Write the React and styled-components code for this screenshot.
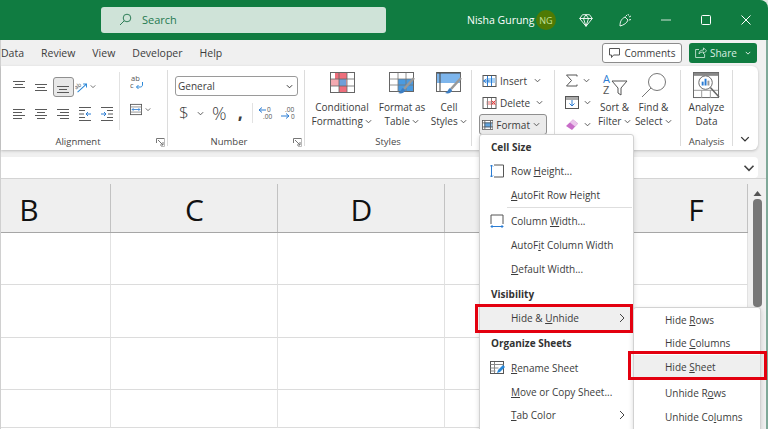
import React from "react";
import styled, { createGlobalStyle } from "styled-components";

const Global = createGlobalStyle`
  html, body { margin: 0; padding: 0; }
  body { font-family: "Open Sans", "Noto Sans", sans-serif; background: #dfe8e3; }
  * { box-sizing: border-box; }
`;

const Page = styled.div`
  position: relative;
  width: 768px;
  height: 429px;
  overflow: hidden;
  background: #107c41;
  border-radius: 0 8px 0 0;
  color: #3c3c3c;
`;

const TitleBar = styled.div`
  height: 40px;
  display: flex;
  align-items: center;
  padding-left: 101px;
  color: #fff;
`;

const SearchBox = styled.div`
  width: 285px;
  flex: none;
  height: 26px;
  margin-top: -1px;
  border-radius: 3px;
  background: #cfe3d8;
  display: flex;
  align-items: center;
  gap: 10px;
  padding-left: 18px;
  font-size: 11px;
  color: #1f7a50;
`;

const UserName = styled.span`
  margin-left: 81px;
  flex: none;
  font-size: 10.5px;
  width: 69px;
  white-space: nowrap;
`;

const Avatar = styled.div`
  width: 20px;
  height: 20px;
  flex: none;
  border-radius: 50%;
  background: #4f7a04;
  color: #c4e09a;
  font-size: 9px;
  display: flex;
  align-items: center;
  justify-content: center;
`;

const TitleIcons = styled.div`
  display: flex;
  margin-left: 10px;
  align-items: center;
`;

const TitleIcon = styled.div`
  width: 40px;
  flex: none;
  display: flex;
  justify-content: center;
  align-items: center;
`;

const Body = styled.div`
  height: 389px;
  width: 768px;
  background: #f0f0f0;
  border-left: 1px solid #d0d0d0;
  border-right: 2px solid #7fa898;
`;

const TabRow = styled.div`
  height: 26px;
  display: flex;
  align-items: center;
  padding: 0 9px 1px 0;
  font-size: 10.5px;
`;

const Tab = styled.span`
  margin-right: ${(p) => p.$gap}px;
`;

const Comments = styled.button`
  margin-left: auto;
  width: 80px;
  height: 20px;
  padding: 0;
  border: 1px solid #8c8c8c;
  border-radius: 3px;
  background: #fff;
  font: 10px "Open Sans", sans-serif;
  color: #3c3c3c;
  display: flex;
  align-items: center;
  justify-content: center;
  gap: 5px;
`;

const Share = styled.button`
  margin-left: 7px;
  width: 68px;
  height: 20px;
  padding: 0 0 0 6px;
  border: 0;
  border-radius: 3px;
  background: #107c41;
  font: 10px "Open Sans", sans-serif;
  color: #dbeee3;
  display: flex;
  align-items: center;
  gap: 3px;
`;

const Ribbon = styled.div`
  width: 757px;
  height: 84px;
  background: #fff;
  border-radius: 0 6px 6px 0;
  box-shadow: 0 1px 3px rgba(0, 0, 0, 0.22);
  display: flex;
  padding-top: 4px;
`;

const Group = styled.div`
  width: ${(p) => p.$w}px;
  height: 76px;
  flex: none;
  position: relative;
  border-right: ${(p) => (p.$plain ? "0" : "1px solid #dcdcdc")};
  display: flex;
  flex-direction: column;
  ${(p) => p.$plain && "align-items: center; justify-content: flex-end; padding-bottom: 2px;"}
`;

const GroupContent = styled.div`
  flex: 1;
  min-height: 0;
  display: flex;
  flex-direction: ${(p) => (p.$stack ? "column" : "row")};
  padding-left: ${(p) => p.$pad || 0}px;
`;

const GroupLabel = styled.div`
  height: 15px;
  margin-bottom: -4px;
  text-align: center;
  font-size: 9.5px;
  line-height: 14px;
  padding-right: ${(p) => p.$shift || 0}px;
  color: #484848;
`;

const Launcher = styled.svg`
  position: absolute;
  right: 2px;
  bottom: -1px;
`;

const IconGrid = styled.div`
  display: grid;
  grid-template-columns: repeat(5, 22px);
  grid-auto-rows: 27px;
  align-items: center;
  justify-items: center;
  padding: 3px 0 0 7px;
`;

const IconCell = styled.div`
  width: 21px;
  height: 20px;
  display: flex;
  align-items: center;
  justify-content: center;
  gap: 3px;
  border-radius: 3px;
  ${(p) => p.$active && "background: #e8e8e8; border: 1px solid #8f8f8f;"}
`;

const VSep = styled.div`
  width: 1px;
  height: 58px;
  flex: none;
  margin: 2px 0 0 ${(p) => p.$ml || 0}px;
  background: #e2e2e2;
`;

const NumberSep = styled.div`
  width: 1px;
  height: 20px;
  flex: none;
  background: #e2e2e2;
`;

const WrapColumn = styled.div`
  display: flex;
  flex-direction: column;
  gap: 7px;
  padding: 4px 0 0 10px;
`;

const FormatSelect = styled.div`
  width: 123px;
  height: 20px;
  margin: 6px 0 0 7px;
  border: 1px solid #9a9a9a;
  border-radius: 3px;
  font-size: 10px;
  padding: 0 4px 0 2px;
  display: flex;
  align-items: center;
  justify-content: space-between;
`;

const NumberRow = styled.div`
  display: flex;
  align-items: center;
  height: 20px;
  margin: 7px 0 0 11px;
`;

const NumberGlyph = styled.span`
  font-size: ${(p) => p.$size}px;
  font-weight: ${(p) => p.$weight || 300};
  width: ${(p) => p.$w}px;
  margin-left: ${(p) => p.$ml || 0}px;
  flex: none;
  line-height: 20px;
`;

const Large = styled.div`
  width: ${(p) => p.$w}px;
  flex: none;
  display: flex;
  flex-direction: column;
  align-items: center;
  font-size: 10px;
  line-height: 13.5px;
  text-align: center;
  white-space: nowrap;
`;

const LargeIcon = styled.div`
  height: 31px;
  padding-top: ${(p) => p.$top ?? 6}px;
`;

const CellStack = styled.div`
  width: 74px;
  margin-left: 10px;
  display: flex;
  flex-direction: column;
  gap: 1px;
  font-size: 10px;
`;

const CellAction = styled.div`
  height: 21px;
  display: flex;
  align-items: center;
  gap: 3px;
  position: relative;
  border-radius: 3px;
  ${(p) => p.$active && "background: #ebebeb; border: 1px solid #8f8f8f; margin-left: -3px; padding-left: 2px; width: 68px;"}
`;

const ActionArrow = styled.span`
  margin-left: auto;
  margin-right: ${(p) => p.$mr}px;
  display: flex;
`;

const EditStack = styled.div`
  width: 40px;
  flex: none;
  display: flex;
  flex-direction: column;
  padding: 1px 0 0 10px;
  gap: 3px;
`;

const EditItem = styled.div`
  height: 19px;
  display: flex;
  align-items: center;
  gap: 5px;
`;

const FormulaBar = styled.div`
  width: 757px;
  height: 21px;
  margin-top: 7px;
  background: #fff;
  border-radius: 0 4px 4px 0;
  display: flex;
  align-items: center;
  justify-content: flex-end;
  padding-right: 3px;
`;

const Sheet = styled.div`
  height: 251px;
  display: flex;
  border-top: 1px solid #d4d4d4;
`;

const GridWrap = styled.div`
  width: 747px;
  flex: none;
  display: grid;
  grid-template-columns: 110px 167px 167px 167px 136px;
  grid-template-rows: 54px 52px 53px 52px 38px;
  background: #fff;
`;

const ColHead = styled.div`
  background: linear-gradient(#c2c2c2, #c2c2c2) right bottom / 1px 48px no-repeat, #efefef;
  border-bottom: 1px solid #a6a6a6;
  font: 30px "Open Sans", sans-serif;
  color: #111;
  display: flex;
  align-items: center;
  justify-content: center;
  padding: 8px ${(p) => p.$right || 0}px 0 ${(p) => p.$left || 0}px;
`;

const Cell = styled.div`
  border-right: 1px solid #e2e2e2;
  border-bottom: 1px solid #dcdcdc;
`;

const ScrollTrack = styled.div`
  width: 18px;
  padding: 11px 0 0 5px;
  display: flex;
  flex-direction: column;
  gap: 3px;
`;

const ScrollThumb = styled.div`
  width: 9px;
  height: 108px;
  border-radius: 4px;
  background: #777;
`;

const Menu = styled.div`
  position: absolute;
  left: 479px;
  top: 134px;
  width: 155px;
  height: 300px;
  background: #fff;
  border: 1px solid #d2d2d2;
  border-radius: 3px;
  box-shadow: 0 2px 5px rgba(0, 0, 0, 0.15);
  font-size: 10px;
`;

const SubMenu = styled.div`
  position: absolute;
  left: 633px;
  top: 307px;
  width: 128px;
  height: 130px;
  background: #fff;
  border: 1px solid #d2d2d2;
  border-radius: 3px;
  box-shadow: 0 2px 5px rgba(0, 0, 0, 0.15);
  font-size: 10px;
`;

const MenuHead = styled.div`
  height: ${(p) => p.$h || 25}px;
  padding-left: 11px;
  font-weight: 700;
  display: flex;
  align-items: center;
  color: #333;
`;

const MenuItem = styled.div`
  position: relative;
  height: ${(p) => p.$h || 24}px;
  display: flex;
  align-items: center;
  padding-left: 31px;
  white-space: nowrap;
  ${(p) => p.$hot && "background: #efefef;"}
  u { text-underline-offset: 1px; }
`;

const MenuIcon = styled.svg`
  position: absolute;
  left: 10px;
  top: 50%;
  transform: translateY(-50%);
`;

const MenuArrow = styled.svg`
  position: absolute;
  right: 8px;
  top: 50%;
  transform: translateY(-50%);
`;

const MenuRule = styled.div`
  height: 1px;
  margin: 0 1px 1px 27px;
  background: #dedede;
`;

const RedBox = styled.div`
  position: absolute;
  left: ${(p) => p.$l}px;
  top: ${(p) => p.$t}px;
  width: ${(p) => p.$w}px;
  height: ${(p) => p.$h}px;
  border: 3px solid #e3000f;
`;

const Chevron = ({ c = "#555", s = 7 }) => (
  <svg width={s} height={s} viewBox="0 0 8 8">
    <path d="M1 2.5 4 5.5 7 2.5" fill="none" stroke={c} strokeWidth="1.1" />
  </svg>
);

const Lines = ({ rows }) => (
  <svg width="14" height="14" viewBox="0 0 14 14">
    {rows.map(([x1, x2, y], i) => (
      <line key={i} x1={x1} x2={x2} y1={y} y2={y} stroke="#5a5a5a" strokeWidth="1" />
    ))}
  </svg>
);

const Indent = ({ flip }) => (
  <svg width="14" height="14" viewBox="0 0 14 14">
    <path d={flip ? "M7 3.500h6M7 10.500h6M8 7h5" : "M1 3.500h6M1 10.500h6M1 7h5"} stroke="#5a5a5a" fill="none" />
    <path d={flip ? "M1 7h5M4 5l2 2-2 2" : "M13 7H8M10 5 8 7l2 2"} stroke="#2b7cd3" fill="none" />
    <path d="M1 13.500h12M1 .5h12" stroke="#5a5a5a" />
  </svg>
);

const ConditionalIcon = () => (
  <svg width="25" height="21" viewBox="0 0 25 21">
    <rect x=".5" y=".5" width="24" height="20" fill="#fff" stroke="#666" />
    <rect x="5" y="1" width="12" height="6" fill="#ee6f7c" />
    <rect x="1" y="7" width="16" height="7" fill="#f4aab1" />
    <rect x="9" y="14" width="8" height="6" fill="#ee6f7c" />
    <rect x="9" y="7" width="7" height="7" fill="#6f9fd8" />
    <path d="M1 7h23M1 14h23M9 1v19M17 1v19" stroke="#666" strokeWidth=".8" fill="none" />
  </svg>
);

const TableIcon = ({ full }) => (
  <svg width="27" height="25" viewBox="0 0 27 25">
    <rect x=".5" y=".5" width="24" height="19" fill="#fff" stroke="#666" />
    {full ? (
      <rect x="1" y="1" width="23" height="10" fill="#7db5ec" />
    ) : (
      <rect x="9" y="7" width="15" height="12" fill="#4a9ae0" />
    )}
    {full ? (
      <path d="M1 1h23M4 1v18" stroke="#444" fill="none" />
    ) : (
      <path d="M1 7h23M1 13h23M9 1v19M17 1v19" stroke="#777" strokeWidth=".8" fill="none" />
    )}
    <path d="M25 6 15 17" stroke="#999" strokeWidth="2.6" />
    <path d="M14 16c-2 1-2 4-5 5 3 1 7 0 7-3z" fill="#3d7fc4" />
  </svg>
);

const Launch = () => (
  <Launcher width="9" height="9" viewBox="0 0 9 9">
    <path d="M.5 5V.5H8.500M2 2l5 5M7 4v3H4" fill="none" stroke="#777" />
    <path d="M8.500 .5V8.500H5" fill="none" stroke="#bbb" />
  </Launcher>
);

const AlignRows = [
  [[1, 13, 1.5], [3, 11, 4.5], [1, 13, 7.5]],
  [[1, 13, 4.5], [3, 11, 7.5], [1, 13, 10.5]],
  [[1, 13, 6.5], [3, 11, 9.5], [1, 13, 12.5]],
];

const columns = ["B", "C", "D", "", "F"];

export default function App() {
  return (
    <Page>
      <Global />
      <TitleBar>
        <SearchBox>
          <svg width="13" height="13" viewBox="0 0 13 13">
            <circle cx="8" cy="5" r="3.800" fill="none" stroke="#2f7d57" />
            <path d="M5.200 7.800 1 12" stroke="#2f7d57" />
          </svg>
          Search
        </SearchBox>
        <UserName>Nisha Gurung</UserName>
        <Avatar>NG</Avatar>
        <TitleIcons>
          <TitleIcon>
            <svg width="14" height="13" viewBox="0 0 14 13">
              <path d="M3.500 .7h7L13.300 4.500 7 12.300.7 4.500zM.7 4.500h12.600M4.500 4.500 7 .7l2.500 3.800L7 12.300z" fill="none" stroke="#fff" strokeWidth=".9" />
            </svg>
          </TitleIcon>
          <TitleIcon>
            <svg width="14" height="14" viewBox="0 0 14 14">
              <path d="M1 13c0-4 1-7 5-9l3 3c-1 3-4 5-8 6zM6.500 3.500 8 2M10 7l2-.5M9 1l.5 1.500M12 3l-2 1" fill="none" stroke="#fff" strokeWidth=".9" />
            </svg>
          </TitleIcon>
          <TitleIcon>
            <svg width="10" height="10" viewBox="0 0 10 10"><path d="M0 5h10" stroke="#cfe3d8" /></svg>
          </TitleIcon>
          <TitleIcon>
            <svg width="10" height="10" viewBox="0 0 10 10"><rect x=".5" y=".5" width="9" height="9" rx="1" fill="none" stroke="#fff" /></svg>
          </TitleIcon>
          <TitleIcon>
            <svg width="10" height="10" viewBox="0 0 10 10"><path d="M.5.5l9 9M9.500.5l-9 9" stroke="#fff" /></svg>
          </TitleIcon>
        </TitleIcons>
      </TitleBar>
      <Body>
        <TabRow>
          <Tab $gap={17}>Data</Tab>
          <Tab $gap={17}>Review</Tab>
          <Tab $gap={17}>View</Tab>
          <Tab $gap={17}>Developer</Tab>
          <Tab $gap={0}>Help</Tab>
          <Comments>
            <svg width="11" height="10" viewBox="0 0 11 10">
              <path d="M.5.500h10v6.500H4.500L2.500 9.500V7H.5z" fill="none" stroke="#555" />
            </svg>
            Comments
          </Comments>
          <Share>
            <svg width="12" height="11" viewBox="0 0 12 11">
              <path d="M4 2.500H.6v8h9V7M4 7c0-3 2-4 4.500-4V.8l3 3-3 3V5C6.500 5 5 5.500 4 7z" fill="none" stroke="#dbeee3" strokeWidth=".8" />
            </svg>
            Share
            <ActionArrow $mr={6}><Chevron c="#fff" s={6} /></ActionArrow>
          </Share>
        </TabRow>
        <Ribbon>
          <Group $w={167}>
            <GroupContent>
              <IconGrid>
                {AlignRows.map((rows, i) => (
                  <IconCell key={i} $active={i === 2}><Lines rows={rows} /></IconCell>
                ))}
                <IconCell>
                  <svg width="14" height="14" viewBox="0 0 14 14">
                    <text x="0" y="8" fontSize="7" fill="#555" transform="rotate(-35 4 7)" fontFamily="Open Sans">ab</text>
                    <path d="M3 13 13 4M9.500 3.500H13.500V7.500" stroke="#2b88d8" fill="none" strokeWidth="1.200" />
                  </svg>
                  <Chevron />
                </IconCell>
                <span />
                <IconCell><Lines rows={[[1, 13, 2.5], [1, 10, 5.5], [1, 13, 8.5], [1, 10, 11.5]]} /></IconCell>
                <IconCell><Lines rows={[[1, 13, 2.5], [3, 11, 5.5], [1, 13, 8.5], [3, 11, 11.5]]} /></IconCell>
                <IconCell><Lines rows={[[1, 13, 2.5], [4, 13, 5.5], [1, 13, 8.5], [4, 13, 11.5]]} /></IconCell>
                <IconCell><Indent /></IconCell>
                <IconCell><Indent flip /></IconCell>
              </IconGrid>
              <VSep $ml={1} />
              <WrapColumn>
                <svg width="14" height="18" viewBox="0 0 14 18">
                  <text x="1" y="7" fontSize="7.500" fill="#555" fontFamily="Open Sans">ab</text>
                  <text x="0" y="14" fontSize="7.500" fill="#555" fontFamily="Open Sans">c</text>
                  <path d="M12.500 8v3c0 1-1 2-2 2H6.500M8.500 11 6.500 13l2 2" fill="none" stroke="#2b88d8" />
                </svg>
                <IconCell>
                  <svg width="14" height="13" viewBox="0 0 14 13">
                    <rect x=".5" y=".5" width="13" height="12" fill="#fff" stroke="#555" />
                    <path d="M.5 3.500h13M.5 9.500h13" stroke="#888" />
                    <path d="M2.500 6.500h9M4 5 2.500 6.500 4 8M10 5l1.500 1.500L10 8" stroke="#2b7cd3" fill="none" />
                  </svg>
                  <Chevron />
                </IconCell>
              </WrapColumn>
            </GroupContent>
            <GroupLabel $shift={12}>Alignment</GroupLabel>
            <Launch />
          </Group>
          <Group $w={137}>
            <GroupContent $stack>
              <FormatSelect>General<Chevron c="#333" /></FormatSelect>
              <NumberRow>
                <NumberGlyph $size={17} $w={18}>$</NumberGlyph>
                <Chevron />
                <NumberGlyph $size={18} $w={26} $ml={8}>%</NumberGlyph>
                <NumberGlyph $size={15} $w={14} $weight={800}>,</NumberGlyph>
                <NumberSep />
                <svg width="17" height="15" viewBox="0 0 17 15" style={{ margin: "0 5px 0 5px" }}>
                  <text x="9" y="6" fontSize="6.500" fill="#555" fontFamily="Open Sans">0</text>
                  <text x="5" y="13" fontSize="6.500" fill="#555" fontFamily="Open Sans">.00</text>
                  <path d="M8 4H1M4 1.500 1 4l3 2.500" stroke="#2b7cd3" fill="none" />
                </svg>
                <svg width="17" height="15" viewBox="0 0 17 15">
                  <text x="5" y="6" fontSize="6.500" fill="#555" fontFamily="Open Sans">.00</text>
                  <text x="11" y="13" fontSize="6.500" fill="#555" fontFamily="Open Sans">0</text>
                  <path d="M1 10h8M6 7.500 9 10l-3 2.500" stroke="#2b7cd3" fill="none" />
                </svg>
              </NumberRow>
            </GroupContent>
            <GroupLabel $shift={14}>Number</GroupLabel>
            <Launch />
          </Group>
          <Group $w={167}>
            <GroupContent $pad={2}>
              <Large $w={70}>
                <LargeIcon $top={2}><ConditionalIcon /></LargeIcon>
                <div>Conditional</div>
                <div>Formatting <Chevron /></div>
              </Large>
              <Large $w={50}>
                <LargeIcon $top={2}><TableIcon /></LargeIcon>
                <div>Format as</div>
                <div>Table <Chevron /></div>
              </Large>
              <Large $w={44}>
                <LargeIcon $top={2}><TableIcon full /></LargeIcon>
                <div>Cell</div>
                <div>Styles <Chevron /></div>
              </Large>
            </GroupContent>
            <GroupLabel>Styles</GroupLabel>
          </Group>
          <Group $w={83}>
            <CellStack>
              <CellAction>
                <svg width="15" height="12" viewBox="0 0 14 12">
                  <rect x=".5" y=".5" width="13" height="11" fill="#fff" stroke="#555" />
                  <rect x="5" y="3" width="8" height="5" fill="#a9d0f2" />
                  <path d="M1 6h6M4 4 1 6l3 2M5 1v10M9 1v10" stroke="#2b7cd3" fill="none" />
                </svg>
                Insert
                <ActionArrow $mr={15}><Chevron /></ActionArrow>
              </CellAction>
              <CellAction>
                <svg width="15" height="12" viewBox="0 0 14 12">
                  <rect x=".5" y=".5" width="13" height="11" fill="#fff" stroke="#555" />
                  <rect x="4" y="4" width="9" height="4" fill="#f3b4b4" />
                  <path d="M5 1v10M9 1v10" stroke="#888" />
                  <path d="M9 3.500l4 4M13 3.500l-4 4" stroke="#e03c3c" />
                </svg>
                Delete
                <ActionArrow $mr={13}><Chevron /></ActionArrow>
              </CellAction>
              <CellAction $active>
                <svg width="15" height="13" viewBox="0 0 14 13">
                  <rect x=".5" y="1.500" width="13" height="11" fill="#fff" stroke="#555" />
                  <rect x="3" y="4" width="9" height="6" fill="#5fa4e0" />
                  <path d="M.5 4.500h13M.5 9.500h13M3.500 2v10M10.500 2v10" stroke="#555" fill="none" />
                </svg>
                Format
                <ActionArrow $mr={6}><Chevron /></ActionArrow>
              </CellAction>
            </CellStack>
          </Group>
          <Group $w={126}>
            <GroupContent>
              <EditStack>
                <EditItem>
                  <svg width="13" height="13" viewBox="0 0 13 13"><path d="M12 2.500V1H1.500L6.500 6.500 1.500 12H12v-1.500" fill="none" stroke="#555" /></svg>
                  <Chevron />
                </EditItem>
                <EditItem>
                  <svg width="14" height="13" viewBox="0 0 14 13">
                    <rect x=".5" y=".5" width="13" height="12" fill="#fff" stroke="#555" />
                    <rect x="1" y="1" width="12" height="3" fill="#aaa" />
                    <path d="M7 4v6M4.500 7.500 7 10l2.500-2.500" stroke="#2b7cd3" fill="none" />
                  </svg>
                  <Chevron />
                </EditItem>
                <EditItem>
                  <svg width="14" height="13" viewBox="0 0 14 13">
                    <path d="M1 8 8 1.500l5 4L7 12z" fill="#c86cc8" />
                    <path d="M8 1.500l5 4-3 3-5-4z" fill="#eac6ea" />
                  </svg>
                  <Chevron />
                </EditItem>
              </EditStack>
              <Large $w={39}>
                <LargeIcon $top={3}>
                  <svg width="26" height="25" viewBox="0 0 26 25">
                    <text x="1" y="10" fontSize="11" fill="#2b7cd3" fontFamily="Open Sans">A</text>
                    <text x="1" y="21" fontSize="11" fill="#555" fontFamily="Open Sans">Z</text>
                    <path d="M10 8h15l-6 7v7l-3-2v-5z" fill="none" stroke="#555" />
                  </svg>
                </LargeIcon>
                <div>Sort &amp;</div>
                <div>Filter <Chevron /></div>
              </Large>
              <Large $w={39}>
                <LargeIcon $top={3}>
                  <svg width="26" height="25" viewBox="0 0 26 25">
                    <circle cx="16" cy="9" r="8.500" fill="none" stroke="#777" />
                    <path d="M10 15 1 24" stroke="#777" />
                  </svg>
                </LargeIcon>
                <div>Find &amp;</div>
                <div>Select <Chevron /></div>
              </Large>
            </GroupContent>
          </Group>
          <Group $w={52}>
            <GroupContent>
              <Large $w={51}>
                <LargeIcon $top={2}>
                  <svg width="27" height="27" viewBox="0 0 28 28">
                    <rect x=".5" y=".5" width="26" height="26" fill="#fff" stroke="#666" />
                    <rect x="1" y="1" width="25" height="3" fill="#888" />
                    <path d="M1 19h25M9 19v8M18 19v8" stroke="#999" />
                    <circle cx="13" cy="11" r="7" fill="#fff" stroke="#666" />
                    <rect x="9" y="10" width="2" height="4" fill="#2b7cd3" />
                    <rect x="12" y="7" width="2" height="7" fill="#2b7cd3" />
                    <rect x="15" y="9" width="2" height="5" fill="#999" />
                    <path d="M18 16 27 26" stroke="#666" strokeWidth="1.500" />
                  </svg>
                </LargeIcon>
                <div>Analyze</div>
                <div>Data</div>
              </Large>
            </GroupContent>
            <GroupLabel>Analysis</GroupLabel>
          </Group>
          <Group $w={24} $plain>
            <Chevron c="#333" s={10} />
          </Group>
        </Ribbon>
        <FormulaBar><Chevron c="#444" s={12} /></FormulaBar>
        <Sheet>
          <GridWrap>
            {columns.map((c, i) => (
              <ColHead key={i} $right={i === 0 ? 54 : 0} $left={i === 4 ? 32 : 0}>{c}</ColHead>
            ))}
            {Array.from({ length: 20 }, (_, i) => <Cell key={i} />)}
          </GridWrap>
          <ScrollTrack>
            <svg width="9" height="6" viewBox="0 0 8 6"><path d="M4 1 8 6H0z" fill="#555" /></svg>
            <ScrollThumb />
          </ScrollTrack>
        </Sheet>
      </Body>
      <Menu>
        <MenuHead $h={24}>Cell Size</MenuHead>
        <MenuItem>
          <MenuIcon width="14" height="14" viewBox="0 0 14 14">
            <path d="M4 1h9.500v12H4" fill="none" stroke="#555" />
            <path d="M1.500 1v12M0 2.500 1.500 1 3 2.500M0 11.500 1.500 13 3 11.500" fill="none" stroke="#2b7cd3" />
          </MenuIcon>
          <span>Row <u>H</u>eight...</span>
        </MenuItem>
        <MenuItem><span><u>A</u>utoFit Row Height</span></MenuItem>
        <MenuRule />
        <MenuItem>
          <MenuIcon width="14" height="14" viewBox="0 0 14 14">
            <path d="M1 10V1h12v9" fill="none" stroke="#555" />
            <path d="M1 12.500h12M2.500 11 1 12.500 2.500 14M11.500 11l1.500 1.500-1.500 1.500" fill="none" stroke="#2b7cd3" />
          </MenuIcon>
          <span>Column <u>W</u>idth...</span>
        </MenuItem>
        <MenuItem><span>AutoF<u>i</u>t Column Width</span></MenuItem>
        <MenuItem><span><u>D</u>efault Width...</span></MenuItem>
        <MenuHead>Visibility</MenuHead>
        <MenuItem $hot>
          <span>Hide &amp; <u>U</u>nhide</span>
          <MenuArrow width="6" height="9" viewBox="0 0 6 9"><path d="M1 .5 5 4.500 1 8.500" fill="none" stroke="#444" /></MenuArrow>
        </MenuItem>
        <MenuHead $h={26}>Organize Sheets</MenuHead>
        <MenuItem>
          <MenuIcon width="15" height="14" viewBox="0 0 15 14">
            <rect x=".5" y=".5" width="13" height="12" fill="#fff" stroke="#555" />
            <path d="M.5 3.500h13M.5 7h8M.5 10h5M4.500 1v11" stroke="#888" />
            <path d="M7 12l1-3 5-5 2 2-5 5z" fill="#2b88d8" />
          </MenuIcon>
          <span><u>R</u>ename Sheet</span>
        </MenuItem>
        <MenuItem><span><u>M</u>ove or Copy Sheet...</span></MenuItem>
        <MenuItem $h={22}>
          <span><u>T</u>ab Color</span>
          <MenuArrow width="6" height="9" viewBox="0 0 6 9"><path d="M1 .5 5 4.500 1 8.500" fill="none" stroke="#444" /></MenuArrow>
        </MenuItem>
      </Menu>
      <SubMenu>
        <MenuItem $h={23}><span>Hide <u>R</u>ows</span></MenuItem>
        <MenuItem><span>Hide <u>C</u>olumns</span></MenuItem>
        <MenuItem $hot><span>Hide <u>S</u>heet</span></MenuItem>
        <MenuItem $h={28}><span>Unhide R<u>o</u>ws</span></MenuItem>
        <MenuItem $h={20}><span>Unhide Co<u>l</u>umns</span></MenuItem>
      </SubMenu>
      <RedBox $l={475} $t={304} $w={158} $h={29} />
      <RedBox $l={628} $t={351} $w={139} $h={29} />
    </Page>
  );
}
